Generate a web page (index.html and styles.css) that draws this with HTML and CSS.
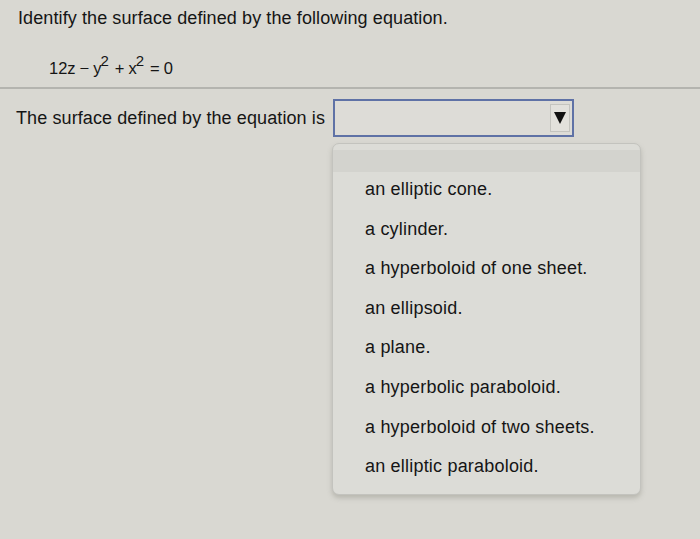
FILE: index.html
```html
<!DOCTYPE html>
<html>
<head>
<meta charset="utf-8">
<link rel="stylesheet" href="styles.css">
</head>
<body>
<div class="page">
  <div class="question">
    <p class="title">Identify the surface defined by the following equation.</p>
    <p class="equation"><span>12z</span><span class="op">&minus;</span><span>y</span><sup>2</sup><span class="op wide">+</span><span>x</span><sup>2</sup><span class="op wide">=</span><span>0</span></p>
  </div>
  <div class="answer">
    <div class="answer-row">
      <span class="label">The surface defined by the equation is</span>
      <div class="select">
        <div class="arrow-btn"><span class="tri"></span></div>
      </div>
    </div>
    <div class="menu">
      <div class="menu-band"></div>
      <ul class="options">
        <li>an elliptic cone.</li>
        <li>a cylinder.</li>
        <li>a hyperboloid of one sheet.</li>
        <li>an ellipsoid.</li>
        <li>a plane.</li>
        <li>a hyperbolic paraboloid.</li>
        <li>a hyperboloid of two sheets.</li>
        <li>an elliptic paraboloid.</li>
      </ul>
    </div>
  </div>
</div>
</body>
</html>
```
FILE: styles.css
```css
html, body {
  margin: 0;
  padding: 0;
}
body {
  width: 700px;
  height: 539px;
  overflow: hidden;
  background: #d9d8d2;
  font-family: "Liberation Sans", Arial, sans-serif;
  color: #151515;
}
.page {
  display: flex;
  flex-direction: column;
}
.question {
  border-bottom: 2px solid #b4b4af;
  height: 89px;
  box-sizing: border-box;
  padding-left: 18px;
}
.title {
  margin: 8px 0 0;
  font-size: 18px;
  line-height: 20px;
  letter-spacing: 0.1px;
}
.equation {
  margin: 31px 0 0 31px;
  font-size: 16.5px;
  line-height: 18px;
}
.equation sup {
  font-size: 15px;
  line-height: 0;
  position: relative;
  top: -2px;
  margin-left: -1px;
}
.op {
  margin: 0 4px;
}
.op.wide {
  margin-left: 6px;
}
.answer {
  padding-top: 10px;
}
.answer-row {
  display: flex;
  align-items: center;
  padding-left: 16px;
}
.label {
  font-size: 18px;
  line-height: 20px;
  letter-spacing: 0.1px;
  width: 317px;
}
.select {
  width: 241px;
  height: 38px;
  box-sizing: border-box;
  border: 2px solid #5f72a6;
  background: #dddcd7;
  display: flex;
  justify-content: flex-end;
  align-items: center;
  padding-right: 2px;
}
.arrow-btn {
  width: 20px;
  height: 28px;
  box-sizing: border-box;
  background: #e2e1dc;
  border: 1px solid #c4c4bf;
  display: flex;
  align-items: center;
  justify-content: center;
}
.tri {
  width: 0;
  height: 0;
  border-left: 6px solid transparent;
  border-right: 6px solid transparent;
  border-top: 12px solid #111;
}
.menu {
  margin: 6px 0 0 332px;
  width: 309px;
  height: 352px;
  box-sizing: border-box;
  border: 1px solid #c3c3be;
  border-radius: 7px;
  background: #dcdcd7;
  box-shadow: 0 3px 5px rgba(120, 120, 110, 0.35);
}
.menu-band {
  margin-top: 6px;
  height: 22px;
  background: #d3d3ce;
}
.options {
  list-style: none;
  margin: -2px 0 0;
  padding: 0;
}
.options li {
  height: 39.6px;
  line-height: 39.6px;
  padding-left: 32px;
  font-size: 18px;
  letter-spacing: 0.2px;
  color: #151515;
}
```
